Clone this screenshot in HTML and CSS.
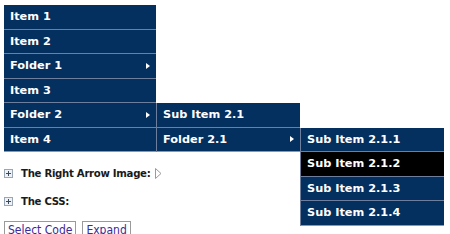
FILE: index.html
```html
<!DOCTYPE html>
<html>
<head>
<meta charset="utf-8">
<link rel="stylesheet" href="styles.css">
</head>
<body>
<ul class="menu">
  <li class="item"><span class="label">Item 1</span></li>
  <li class="item"><span class="label">Item 2</span></li>
  <li class="item folder"><span class="label">Folder 1</span><span class="arrow"></span></li>
  <li class="item"><span class="label">Item 3</span></li>
  <li class="item folder open"><span class="label">Folder 2</span><span class="arrow"></span>
    <ul class="menu sub">
      <li class="item"><span class="label">Sub Item 2.1</span></li>
      <li class="item folder open"><span class="label">Folder 2.1</span><span class="arrow"></span>
        <ul class="menu sub">
          <li class="item"><span class="label">Sub Item 2.1.1</span></li>
          <li class="item hover"><span class="label">Sub Item 2.1.2</span></li>
          <li class="item"><span class="label">Sub Item 2.1.3</span></li>
          <li class="item"><span class="label">Sub Item 2.1.4</span></li>
        </ul>
      </li>
    </ul>
  </li>
  <li class="item"><span class="label">Item 4</span></li>
</ul>
<div class="section first">
  <span class="plus"></span>
  <span class="title">The Right Arrow Image:</span>
  <svg class="outline-arrow" width="7" height="11" viewBox="0 0 7 11"><path d="M0.5 0.5 L6 5.5 L0.5 10.5 Z" fill="none" stroke="#9a9a9a" stroke-width="1"/></svg>
</div>
<div class="section">
  <span class="plus"></span>
  <span class="title">The CSS:</span>
</div>
<div class="buttons">
  <button class="btn">Select Code</button>
  <button class="btn">Expand</button>
</div>
</body>
</html>
```
FILE: styles.css
```css
html, body {
  margin: 0;
  padding: 0;
  background: #fff;
  overflow: hidden;
}
body {
  padding: 5px 0 0 4px;
  font-family: "DejaVu Sans", Verdana, sans-serif;
}
.menu {
  list-style: none;
  margin: 0;
  padding: 0;
  width: 152px;
  background: #03305f;
}
.item {
  position: relative;
  height: 23.5px;
  border-bottom: 1px solid #6e7f9e;
  display: flex;
  align-items: center;
  padding-left: 6px;
  color: #fff;
  font-weight: bold;
  font-size: 11.3px;
  background: #03305f;
}
.item:last-child {
  border-bottom: 1px solid #8a97b0;
}
.item.hover {
  background: #000;
}
.label {
  flex: 1;
}
.arrow {
  width: 0;
  height: 0;
  border-top: 3.5px solid transparent;
  border-bottom: 3.5px solid transparent;
  border-left: 4px solid #fff;
  margin-right: 6px;
}
.sub {
  position: absolute;
  left: 152px;
  top: 0;
  width: 143px;
  border-left: 1px solid #6e7f9e;
}
.sub .sub {
  left: 143px;
}
.section {
  display: flex;
  align-items: center;
  gap: 8px;
  margin-top: 14px;
  height: 14px;
  font-family: "DejaVu Sans Condensed", "DejaVu Sans", Tahoma, sans-serif;
  font-stretch: condensed;
  font-size: 11.3px;
  letter-spacing: -0.3px;
  font-weight: bold;
  color: #1a1a1a;
}
.section + .section {
  margin-top: 14px;
}
.plus {
  width: 7px;
  height: 7px;
  border: 1px solid #9aa6b4;
  background: #eef2f6;
  position: relative;
  flex: none;
}
.plus::before, .plus::after {
  content: "";
  position: absolute;
  background: #3a4a5a;
}
.plus::before { left: 1px; top: 3px; width: 5px; height: 1px; }
.plus::after { left: 3px; top: 1px; width: 1px; height: 5px; }
.outline-arrow {
  margin-left: -3px;
}
.buttons {
  display: flex;
  gap: 6px;
  margin-top: 13px;
}
.btn {
  font-family: "DejaVu Sans Condensed", "DejaVu Sans", Tahoma, sans-serif;
  font-stretch: condensed;
  font-size: 12px;
  color: #3b2a9a;
  background: #fff;
  border: 1px solid #9a9a9a;
  padding: 1px 3px;
  margin: 0;
  height: 19px;
  line-height: 15px;
}
```
